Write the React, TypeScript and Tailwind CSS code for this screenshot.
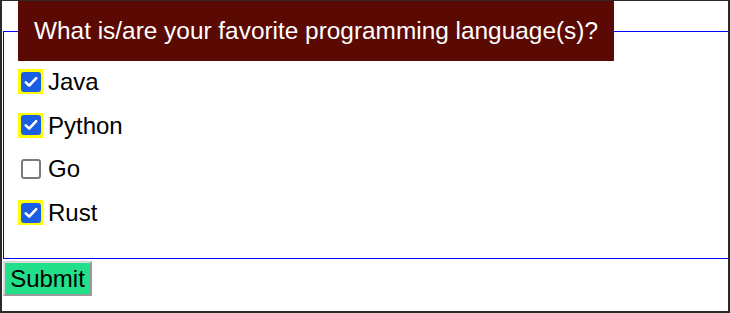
import React from "react";

const items = [
  { label: "Java", checked: true },
  { label: "Python", checked: true },
  { label: "Go", checked: false },
  { label: "Rust", checked: true },
];

function Box({ checked }: { checked: boolean }) {
  if (!checked) {
    return (
      <span className="flex h-[25px] w-[25px] items-center justify-center">
        <span className="block h-[20px] w-[20px] rounded-[3px] border-2 border-[#7a7a80] bg-white" />
      </span>
    );
  }
  return (
    <span className="flex h-[25px] w-[25px] items-center justify-center bg-[#ffff00]">
      <span className="flex h-[20px] w-[20px] items-center justify-center rounded-[3px] bg-[#1a5ee4]">
        <svg width="16" height="16" viewBox="0 0 16 16" fill="none">
          <path d="M2.8 8.4 L6.2 11.6 L13.2 4.2" stroke="white" strokeWidth="2.6" strokeLinecap="round" strokeLinejoin="round" />
        </svg>
      </span>
    </span>
  );
}

export default function App() {
  return (
    <div
      className="h-[313px] w-[730px] overflow-hidden border-2 border-t border-[#2a2a2a] bg-white text-black"
      style={{ fontFamily: '"Liberation Sans", Arial, sans-serif' }}
    >
      <div className="w-[760px] pl-[1px]">
        <fieldset className="m-0 border border-[#0000ff] pb-[32px] pl-[14px] pt-[7px]">
          <legend className="bg-[#5a0a02] px-[16px] py-[16px] text-[24.4px] leading-[28px] text-white">
            What is/are your favorite programming language(s)?
          </legend>
          <div className="flex flex-col gap-[16px]">
            {items.map((it) => (
              <div key={it.label} className="flex h-[27.6px] items-center gap-[5px]">
                <Box checked={it.checked} />
                <span className="text-[24px] leading-[27px]">{it.label}</span>
              </div>
            ))}
          </div>
        </fieldset>
      </div>
      <div className="pl-[1px] pt-[2px]">
        <button className="h-[35px] w-[89px] border-2 border-b-[#9a9a9a] border-l-[#d8d8d8] border-r-[#9a9a9a] border-t-[#d8d8d8] bg-[#22e08a] px-[4px] text-[24px] leading-[27px] text-black">
          Submit
        </button>
      </div>
    </div>
  );
}
